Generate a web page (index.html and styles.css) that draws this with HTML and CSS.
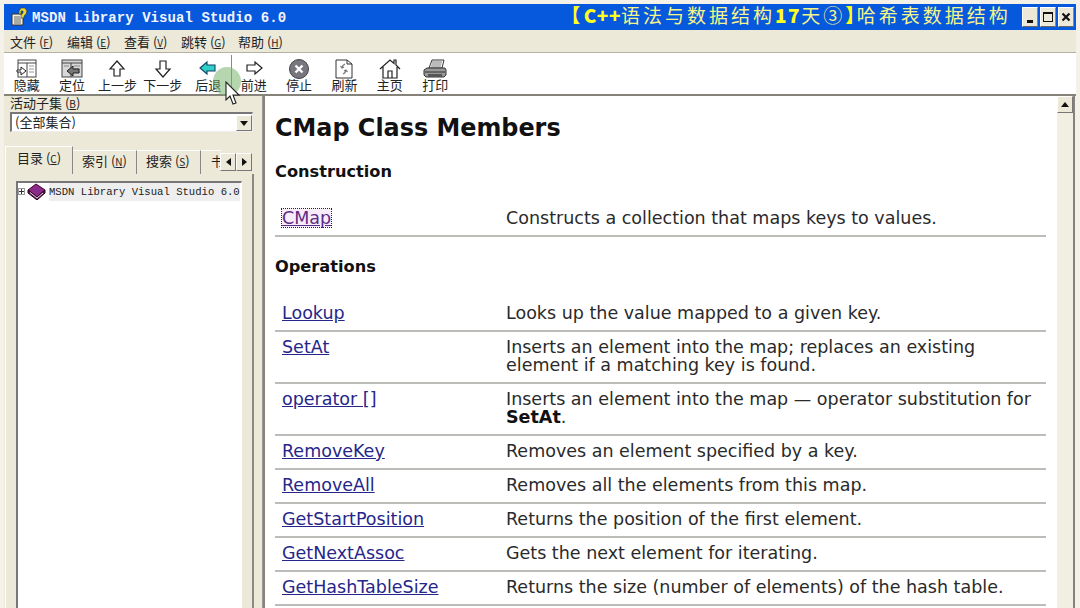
FILE: index.html
```html
<!DOCTYPE html>
<html lang="zh-CN">
  <head>
    <meta charset="utf-8" />
    <title>MSDN Library Visual Studio 6.0</title>
    <link rel="stylesheet" href="styles.css">
  </head>
  <body>
    <div class="window">
      <header class="titlebar">
        <svg class="appicon" width="20" height="20" viewBox="0 0 20 20">
          <path d="M2 7h9l2 2v9H2z" fill="#f2efe2" stroke="#333"/>
          <path d="M4 10h6M4 12h7M4 14h7M4 16h7" stroke="#666"/>
          <path d="M9 7V4l2-3h4l2 3-1 3-2 2v2h-3V8l2-2V4h-2v3z" fill="#e8d830" stroke="#333" stroke-width=".6"/>
        </svg>
        <span class="apptitle">MSDN Library Visual Studio 6.0</span>
        <span class="videotitle"><b class="openbracket">【</b><b>C++</b>语法与数据结构<b class="daynum">17</b>天③<b class="closebracket">】</b>哈希表数据结构</span>
        <div class="winbtns">
          <span class="winbtn"><i class="btnmin"></i></span>
          <span class="winbtn"><i class="btnmax"></i></span>
          <span class="winbtn">
            <svg width="10" height="10" viewBox="0 0 10 10"><path d="M1.500 1.500l7 7M8.500 1.500l-7 7" stroke="#111" stroke-width="2.200"/></svg>
          </span>
        </div>
      </header>

      <nav class="menubar">
        <span>文件 (<u>F</u>)</span>
        <span>编辑 (<u>E</u>)</span>
        <span>查看 (<u>V</u>)</span>
        <span>跳转 (<u>G</u>)</span>
        <span>帮助 (<u>H</u>)</span>
      </nav>

      <div class="toolbar">
        <div class="tool">
          <svg width="22" height="20" viewBox="0 0 22 20"><rect x="2" y="1" width="18" height="17" fill="#fff" stroke="#444"/><path d="M2 4h18M11 4v14" stroke="#444"/><path d="M13 7h5M13 10h5M13 13h5" stroke="#999"/><path d="M1 11h4V8l5 4-5 4v-3H1z" fill="#fff" stroke="#222"/></svg>
          <span>隐藏</span>
        </div>
        <div class="tool">
          <svg width="22" height="20" viewBox="0 0 22 20"><rect x="1" y="1" width="20" height="17" fill="#d8d8d8" stroke="#444"/><path d="M1 4h20M10 4v14" stroke="#444"/><path d="M13 7h6M13 10h6M13 13h6M3 7h5" stroke="#888"/><path d="M18 10h-6V7l-6 5 6 5v-3h6z" fill="#777" stroke="#222"/></svg>
          <span>定位</span>
        </div>
        <div class="tool">
          <svg width="22" height="20" viewBox="0 0 22 20"><path d="M11 2l7 8h-4v7H8v-7H4z" fill="#fff" stroke="#222" stroke-width="1.2"/></svg>
          <span>上一步</span>
        </div>
        <div class="tool">
          <svg width="22" height="20" viewBox="0 0 22 20"><path d="M11 18l7-8h-4V2H8v8H4z" fill="#fff" stroke="#222" stroke-width="1.2"/></svg>
          <span>下一步</span>
        </div>
        <div class="tool">
          <svg width="22" height="20" viewBox="0 0 22 20"><path d="M3 9l7-6v3h8v6h-8v3z" fill="#2fd0c8" stroke="#146" stroke-width="1.1"/></svg>
          <span>后退</span>
        </div>
        <div class="tool">
          <svg width="22" height="20" viewBox="0 0 22 20"><path d="M19 9l-7-6v3H4v6h8v3z" fill="#fff" stroke="#222" stroke-width="1.2"/></svg>
          <span>前进</span>
        </div>
        <div class="tool">
          <svg width="22" height="20" viewBox="0 0 22 20"><circle cx="11" cy="10" r="9.500" fill="#77777d" stroke="#444"/><path d="M7.500 6.500l7 7M14.500 6.500l-7 7" stroke="#fff" stroke-width="2.400"/></svg>
          <span>停止</span>
        </div>
        <div class="tool">
          <svg width="22" height="20" viewBox="0 0 22 20"><path d="M3 1h11l5 4v14H3z" fill="#fff" stroke="#333"/><path d="M14 1v4h5" fill="none" stroke="#333"/><path d="M12 5c-2 1-3 2-3 4M7.500 7l1.500 2 2-1M10 15c2-1 3-2 3-4M14.500 13l-1.500-2-2 1" fill="none" stroke="#777" stroke-width="1.200"/></svg>
          <span>刷新</span>
        </div>
        <div class="tool">
          <svg width="22" height="20" viewBox="0 0 22 20"><path d="M1 10L11 1l4 3.500V1h2v5l4 4M4 8v11h14V8" fill="#fff" stroke="#222" stroke-width="1.200"/><path d="M9 19v-7h4v7" fill="none" stroke="#222" stroke-width="1.200"/></svg>
          <span>主页</span>
        </div>
        <div class="tool">
          <svg width="24" height="20" viewBox="0 0 24 20"><path d="M6 9l3-8h12l-2 8z" fill="#fff" stroke="#333"/><path d="M9 3h10M8.500 5h10M8 7h10" stroke="#777"/><path d="M1 11l3-2h18l1 2v5l-2 2H3l-2-2z" fill="#999" stroke="#333"/><path d="M2 13h20" stroke="#333"/><path d="M5 15h14v3H5z" fill="#555"/></svg>
          <span>打印</span>
        </div>
      </div>

      <div class="mainarea">
        <aside class="sidepane">
          <label class="subsetlabel">活动子集 (<u>B</u>)</label>
          <div class="combo">
            <span>(全部集合)</span>
            <i class="combobtn"></i>
          </div>
          <div class="tabs">
            <span class="tab tabactive">目录 (<u>C</u>)</span>
            <span class="tab">索引 (<u>N</u>)</span>
            <span class="tab">搜索 (<u>S</u>)</span>
            <span class="tab tabcut">书</span>
            <div class="tabarrows">
              <span class="tabarrow arrowleft"></span>
              <span class="tabarrow arrowright"></span>
            </div>
          </div>
          <div class="tabbody">
            <div class="tree">
              <div class="treerow">
                <i class="expander"></i>
                <svg width="19" height="17" viewBox="0 0 19 17"><path d="M1 7l8-6 9 6-8 7z" fill="#8a2a8a" stroke="#402"/><path d="M1 7v3l9 7 8-7V7l-8 7z" fill="#5a1a60" stroke="#301"/><path d="M3 9.500l7 5.500 6-5" fill="none" stroke="#ddd"/></svg>
                <span class="treelabel">MSDN Library Visual Studio 6.0</span>
              </div>
            </div>
          </div>
        </aside>

        <div class="splitter"></div>

        <main class="docpane">
          <div class="doc">
            <h1>CMap Class Members</h1>
            <h2>Construction</h2>
            <div class="members">
              <div class="member">
                <a class="visited">CMap</a>
                <p>Constructs a collection that maps keys to values.</p>
              </div>
            </div>
            <h2>Operations</h2>
            <div class="members">
              <div class="member">
                <a>Lookup</a>
                <p>Looks up the value mapped to a given key.</p>
              </div>
              <div class="member">
                <a>SetAt</a>
                <p>Inserts an element into the map; replaces an existing element if a matching key is found.</p>
              </div>
              <div class="member">
                <a>operator []</a>
                <p>Inserts an element into the map — operator substitution for <b>SetAt</b>.</p>
              </div>
              <div class="member">
                <a>RemoveKey</a>
                <p>Removes an element specified by a key.</p>
              </div>
              <div class="member">
                <a>RemoveAll</a>
                <p>Removes all the elements from this map.</p>
              </div>
              <div class="member">
                <a>GetStartPosition</a>
                <p>Returns the position of the first element.</p>
              </div>
              <div class="member">
                <a>GetNextAssoc</a>
                <p>Gets the next element for iterating.</p>
              </div>
              <div class="member">
                <a>GetHashTableSize</a>
                <p>Returns the size (number of elements) of the hash table.</p>
              </div>
            </div>
          </div>
          <div class="scrollbar">
            <span class="scrollup"></span>
          </div>
        </main>
      </div>
    </div>

    <!-- video overlay: toolbar guide line and mouse pointer -->
    <div class="guideline"></div>
    <div class="clickmark"></div>
    <svg class="pointer" width="18" height="26" viewBox="0 0 18 26"><path d="M1 1v18l4-4 3 8 3-1-3-8h6z" fill="#fff" stroke="#222" stroke-width="1.100"/></svg>
  </body>
</html>
```

FILE: styles.css
```css
* {
  box-sizing: border-box;
}

html,
body {
  margin: 0;
  height: 100%;
  overflow: hidden;
  background-color: #ece9d8;
}

body {
  font-family: "Noto Sans CJK SC", "Liberation Sans", sans-serif;
  font-size: 13px;
  color: #222;
}

.window {
  height: 608px;
  padding: 4px 4px 0 4px;
  display: flex;
  flex-direction: column;
  background-color: #f4f2e8;
}

/* title bar */
.titlebar {
  height: 26px;
  flex: none;
  display: flex;
  align-items: center;
  padding-left: 6px;
  background-color: #0658dc;
}

.appicon {
  flex: none;
  margin-right: 2px;
}

.apptitle {
  margin-top: 1px;
  font-family: "Liberation Mono", monospace;
  font-weight: bold;
  font-size: 14px;
  letter-spacing: 0.070px;
  color: #f2f4ff;
  white-space: nowrap;
}

.videotitle {
  margin-left: 275px;
  width: 442px;
  padding-bottom: 4px;
  font-size: 19px;
  line-height: 24px;
  letter-spacing: 3px;
  color: #f5f58a;
  white-space: nowrap;
}

.videotitle b {
  color: #ffff20;
  font-weight: 900;
  letter-spacing: 0.500px;
}

.videotitle .daynum {
  letter-spacing: 1.500px;
}

.videotitle .openbracket {
  margin-right: 3px;
}

.videotitle .closebracket {
  margin-right: -8px;
}

.winbtns {
  display: flex;
  gap: 2px;
  margin-left: auto;
  margin-right: 2px;
}

.winbtn {
  width: 16px;
  height: 20px;
  display: flex;
  align-items: center;
  justify-content: center;
  background-color: #ece9d8;
  border: 1px solid;
  border-color: #fff #888 #666 #fff;
}

.btnmin {
  width: 6px;
  height: 3px;
  margin-top: 8px;
  background-color: #111;
}

.btnmax {
  width: 10px;
  height: 10px;
  border: 1px solid #111;
  border-top-width: 2px;
}

/* menu */
.menubar {
  height: 23px;
  flex: none;
  display: flex;
  align-items: center;
  padding-left: 6px;
  gap: 13px;
  background-color: #ece9d8;
  border-bottom: 1px solid #b5b2a5;
  color: #222;
}

.menubar span {
  white-space: nowrap;
  width: 44px;
}

.menubar u {
  font-size: 10px;
}

/* toolbar */
.toolbar {
  height: 43px;
  flex: none;
  display: grid;
  grid-template-columns: repeat(10, 45.400px);
  background-color: #fff;
  border-bottom: 2px solid #85837a;
}

.tool {
  display: flex;
  flex-direction: column;
  align-items: center;
  padding-top: 6px;
  line-height: 15px;
  white-space: nowrap;
  color: #222;
}

.tool svg {
  display: block;
  flex: none;
  margin-bottom: -2px;
}

/* left pane */
.mainarea {
  flex: 1;
  display: flex;
  min-height: 0;
}

.sidepane {
  width: 250px;
  flex: none;
  display: flex;
  flex-direction: column;
  padding-left: 1px;
  background-color: #ece9d8;
}

.subsetlabel {
  height: 15px;
  padding-left: 5px;
  line-height: 14px;
}

.subsetlabel u,
.tab u {
  font-size: 10px;
}

.combo {
  width: 243px;
  height: 20px;
  margin-left: 5px;
  margin-top: 1px;
  display: flex;
  align-items: center;
  justify-content: space-between;
  padding-left: 3px;
  line-height: 15px;
  background-color: #fff;
  border: 1px solid;
  border-color: #777 #eee #eee #777;
  border-width: 2px 1px 1px 2px;
}

.combo span {
  margin-top: -2px;
}

.combobtn {
  width: 16px;
  height: 16px;
  position: relative;
  background-color: #ece9d8;
  border: 1px solid;
  border-color: #fff #777 #777 #fff;
}

.combobtn::after {
  content: "";
  position: absolute;
  left: 3px;
  top: 5px;
  border: 4px solid transparent;
  border-top: 5px solid #111;
  border-bottom: 0;
}

.tabs {
  height: 28px;
  margin-top: 14px;
  display: flex;
  align-items: flex-end;
  position: relative;
}

.tab {
  height: 24px;
  width: 64px;
  flex: none;
  padding-left: 9px;
  line-height: 20px;
  white-space: nowrap;
  border-right: 1px solid #888;
  border-top: 1px solid #fff;
}

.tabactive {
  height: 28px;
  width: 68px;
  padding-left: 11px;
  line-height: 21px;
  background-color: #ece9d8;
  border-left: 1px solid #fff;
  border-top: 1px solid #fff;
}

.tabcut {
  width: 20px;
  padding-left: 10px;
  border-right: 0;
}

.tabarrows {
  position: absolute;
  left: 215px;
  top: 7px;
  display: flex;
}

.tabarrow {
  width: 16px;
  height: 18px;
  position: relative;
  background-color: #ece9d8;
  border: 1px solid;
  border-color: #fff #777 #777 #fff;
}

.tabarrow::after {
  content: "";
  position: absolute;
  top: 4px;
  left: 5px;
  border: 4px solid transparent;
}

.arrowleft::after {
  border-right: 5px solid #111;
  border-left: 0;
}

.arrowright::after {
  border-left: 5px solid #111;
  border-right: 0;
}

.tabbody {
  flex: 1;
  min-height: 0;
  width: 249px;
  padding: 7px 10px 0 10px;
  background-color: #ece9d8;
  border-left: 1px solid #fff;
  border-right: 2px solid #8c8a80;
}

.tree {
  height: 100%;
  background-color: #fff;
  border: 1px solid;
  border-color: #777 #fff #fff #777;
  border-width: 2px 1px 0 2px;
}

.treerow {
  height: 17px;
  display: flex;
  align-items: center;
}

.expander {
  width: 7px;
  height: 7px;
  flex: none;
  margin-right: 2px;
  border: 1px solid #999;
  background: linear-gradient(#333, #333) center / 5px 1px no-repeat, linear-gradient(#333, #333) center / 1px 5px no-repeat;
}

.treerow svg {
  flex: none;
}

.treelabel {
  margin-left: 3px;
  padding: 1px 0;
  font-family: "Liberation Mono", monospace;
  font-size: 10.600px;
  line-height: 16px;
  white-space: nowrap;
  background-color: #eeeeee;
  color: #222;
}

.splitter {
  width: 9px;
  flex: none;
  background-color: #ece9d8;
  border-right: 1px solid #999;
}

/* right pane */
.docpane {
  flex: 1;
  display: flex;
  min-width: 0;
  margin-right: 1px;
  background-color: #fff;
  border-left: 2px solid #85837a;
  border-right: 2px solid #85837a;
}

.doc {
  flex: 1;
  min-width: 0;
  padding: 16px 11px 0 10px;
  font-family: "DejaVu Sans", sans-serif;
  overflow: hidden;
}

.doc h1 {
  margin: 0;
  height: 30px;
  font-size: 23.900px;
  line-height: 32px;
  color: #111;
}

.doc h2 {
  margin: 19px 0 20px;
  height: 22px;
  font-size: 16.200px;
  line-height: 22px;
  color: #111;
}

.members {
  display: flex;
  flex-direction: column;
}

.member {
  display: grid;
  grid-template-columns: 224px 1fr;
  padding: 6px 7px 8px;
  border-bottom: 2px solid #bcbcb8;
  line-height: 18px;
  font-size: 17.500px;
}

.member a {
  justify-self: start;
  color: #26268a;
  text-decoration: underline;
}

.member a.visited {
  color: #5c2c86;
  background-color: #f8ecfa;
  outline: 1px dotted #222;
}

.member p {
  margin: 0;
  color: #2a2a2a;
}

.member p b {
  color: #111;
}

.scrollbar {
  width: 16px;
  flex: none;
  background-color: #f1efe2;
}

.scrollup {
  display: block;
  height: 17px;
  position: relative;
  background-color: #ece9d8;
  border: 1px solid;
  border-color: #fff #777 #777 #fff;
}

.scrollup::after {
  content: "";
  position: absolute;
  left: 3px;
  top: 5px;
  border: 4px solid transparent;
  border-bottom: 5px solid #111;
  border-top: 0;
}

/* overlay from the screen recording */
.guideline {
  position: absolute;
  left: 231px;
  top: 55px;
  width: 1px;
  height: 40px;
  background-color: #888;
}

.clickmark {
  position: absolute;
  left: 213px;
  top: 67px;
  width: 28px;
  height: 29px;
  border-radius: 50%;
  background-color: rgba(120, 180, 110, 0.55);
}

.pointer {
  position: absolute;
  left: 225px;
  top: 81px;
}
```
